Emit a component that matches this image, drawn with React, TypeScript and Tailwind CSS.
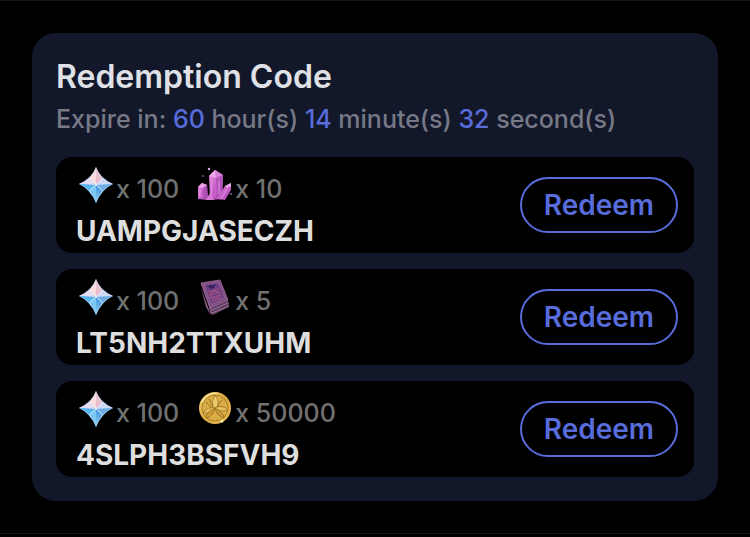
import { useEffect, useState } from 'react';
import type { ReactNode } from 'react';

type Reward = {
  icon: ReactNode;
  amount: number;
};

type Redemption = {
  code: string;
  rewards: Reward[];
};

function PrimogemIcon() {
  return (
    <svg viewBox="-2 -1 40 40" className="size-10 shrink-0" aria-hidden="true">
      <defs>
        <linearGradient id="gem-top" x1="0" y1="0" x2="0" y2="1">
          <stop offset="0" stopColor="#f3cdd6" />
          <stop offset="1" stopColor="#e6b9d0" />
        </linearGradient>
        <linearGradient id="gem-bottom" x1="0" y1="0" x2="0" y2="1">
          <stop offset="0" stopColor="#3c8fdc" />
          <stop offset="1" stopColor="#9bd6f5" />
        </linearGradient>
      </defs>
      <path d="M18 1Q22 12 35 18Q24 23 18 37Q12 23 1 18Q14 12 18 1Z" fill="#a9cdf2" />
      <path d="M18 1Q20 8 25 12L18 19Z" fill="url(#gem-top)" />
      <path d="M18 1Q16 8 11 12L18 19Z" fill="#f7dfe0" />
      <path d="M11 12Q7 16 1 18L18 19Z" fill="#e3dcf0" />
      <path d="M25 12Q29 16 35 18L18 19Z" fill="#cfd9f5" />
      <path d="M1 18Q7 20 11 25L18 19Z" fill="#56b4f0" />
      <path d="M35 18Q29 20 25 25L18 19Z" fill="#6face6" />
      <path d="M11 25Q16 29 18 37L18 19Z" fill="#7cc8f5" />
      <path d="M25 25Q20 29 18 37L18 19Z" fill="url(#gem-bottom)" />
      <path d="M11 12L18 19L25 12M11 25L18 19L25 25" fill="none" stroke="#e9f2ff" strokeWidth="0.8" />
    </svg>
  );
}

function CrystalIcon() {
  return (
    <svg viewBox="-2 -1 40 40" className="size-10 shrink-0" aria-hidden="true">
      <defs>
        <linearGradient id="crystal" x1="0" y1="0" x2="1" y2="1">
          <stop offset="0" stopColor="#e58be0" />
          <stop offset="0.5" stopColor="#cb62cb" />
          <stop offset="1" stopColor="#a848b0" />
        </linearGradient>
      </defs>
      <path d="M12 10L18 4L26 9L25 33L13 34Z" fill="url(#crystal)" />
      <path d="M12 10L18 4L19 12Z" fill="#efa6ea" />
      <path d="M18 4L26 9L19 12Z" fill="#d880d9" />
      <path d="M19 12L26 9L25 33L20 33Z" fill="#b252ba" />
      <path d="M15 13L14 30M22 15V28" stroke="#e593e1" strokeWidth="1" />
      <path d="M1 21L5 17L10 19L11 34L1 33Z" fill="url(#crystal)" />
      <path d="M1 21L5 17L10 19L6 22Z" fill="#eba2e6" />
      <path d="M6 22L10 19L11 34L7 33Z" fill="#ac52b4" />
      <path d="M3 24V31" stroke="#eaa5e6" strokeWidth="1" />
      <path d="M34 17L34 24L28 34L20 33L28 20Z" fill="url(#crystal)" />
      <path d="M34 17L28 20L30 22L34 20Z" fill="#eda5ea" />
      <path d="M30 23L24 33" stroke="#e393df" strokeWidth="1" />
      <path d="M9 34L13 27L17 34Z" fill="#d877d5" />
      <circle cx="12" cy="3" r="1.2" fill="#d8aee6" />
      <circle cx="6" cy="10" r="0.9" fill="#8f60a5" />
      <circle cx="34" cy="28" r="0.9" fill="#a973b8" />
    </svg>
  );
}

function BookIcon() {
  return (
    <svg viewBox="-2 -1 40 40" className="size-10 shrink-0" aria-hidden="true">
      <path d="M4 6L12 29L13 36L16 37L32 29L32 25L29 18Z" fill="#5f3d62" />
      <path d="M4 10L12 32L13 36L9 29Z" fill="#8d6385" />
      <path d="M12 30L15 32L31 25M13 33L15 35L32 28" fill="none" stroke="#a17b9d" strokeWidth="0.9" />
      <path d="M4 5L23 2L31 22L13 30Z" fill="#7d4d84" stroke="#a06b9a" strokeWidth="0.8" />
      <path d="M7 7L21 4L28 20L14 27Z" fill="#6d4085" stroke="#a4688c" strokeWidth="0.7" />
      <path d="M9 7L12 8L14 6L15 8L19 6L17 10L14 11Z" fill="#33205f" />
      <path d="M11 14L22 11M12 17L23 14M13 20L25 17M15 23L25 20" stroke="#b5547c" strokeWidth="1.1" strokeDasharray="2 1" />
      <circle cx="18" cy="17" r="4" fill="none" stroke="#b5587e" strokeWidth="0.7" />
    </svg>
  );
}

function MoraIcon() {
  return (
    <svg viewBox="-2 -1 40 40" className="size-10 shrink-0" aria-hidden="true">
      <defs>
        <linearGradient id="coin" x1="0" y1="0" x2="1" y2="1">
          <stop offset="0" stopColor="#f3d778" />
          <stop offset="0.5" stopColor="#dba93e" />
          <stop offset="1" stopColor="#e9bd52" />
        </linearGradient>
      </defs>
      <circle cx="18" cy="18" r="16" fill="url(#coin)" />
      <circle cx="18" cy="18" r="13" fill="#d9ac45" stroke="#9d7125" strokeWidth="0.8" />
      <path d="M18 5Q23 11 20 18L16 18Q14 11 18 5Z" fill="#ebcb69" stroke="#99702a" strokeWidth="0.7" />
      <path d="M9 12Q12 16 16 18M12 9Q14 13 16 16M25 10Q22 13 20 17" fill="none" stroke="#8f661e" strokeWidth="0.9" />
      <path d="M6 23Q11 16 18 18Q14 24 6 23ZM31 20Q25 14 18 18Q23 23 31 20Z" fill="#e6c05c" stroke="#94681f" strokeWidth="0.7" />
      <path d="M18 18Q9 22 9 28Q16 27 18 18ZM18 18Q27 23 27 28Q20 26 18 18Z" fill="#cd9b38" stroke="#94681f" strokeWidth="0.7" />
      <path d="M5 12Q10 3 20 3" fill="none" stroke="#fbe9a4" strokeWidth="1.2" strokeLinecap="round" />
      <circle cx="25" cy="31" r="1.5" fill="#fff0ac" />
    </svg>
  );
}

const redemptions: Redemption[] = [
  {
    code: 'UAMPGJASECZH',
    rewards: [
      { icon: <PrimogemIcon />, amount: 100 },
      { icon: <CrystalIcon />, amount: 10 },
    ],
  },
  {
    code: 'LT5NH2TTXUHM',
    rewards: [
      { icon: <PrimogemIcon />, amount: 100 },
      { icon: <BookIcon />, amount: 5 },
    ],
  },
  {
    code: '4SLPH3BSFVH9',
    rewards: [
      { icon: <PrimogemIcon />, amount: 100 },
      { icon: <MoraIcon />, amount: 50000 },
    ],
  },
];

const INITIAL_SECONDS = 60 * 3600 + 14 * 60 + 32;

function Countdown() {
  const [left, setLeft] = useState(INITIAL_SECONDS);

  useEffect(() => {
    // refresh once a minute
    const timer = setInterval(() => setLeft((s) => Math.max(0, s - 60)), 60000);
    return () => clearInterval(timer);
  }, []);

  return (
    <p className="mt-1.5 text-[25px] leading-8 font-medium text-[#777987]">
      Expire in: <span className="text-[#586cdb]">{Math.floor(left / 3600)}</span> hour(s){' '}
      <span className="text-[#586cdb]">{Math.floor((left % 3600) / 60)}</span> minute(s){' '}
      <span className="text-[#586cdb]">{left % 60}</span> second(s)
    </p>
  );
}

export default function App() {
  return (
    <div className="min-h-screen bg-black font-['Inter',sans-serif]">
      <main className="border-y border-[#151515] p-8">
        <section className="rounded-3xl bg-[#12172a] p-6">
          <h1 className="text-[32px] leading-10 font-semibold text-[#dfe1e6]">Redemption Code</h1>
          <Countdown />

          <ul className="mt-5.5 flex flex-col gap-4">
            {redemptions.map((item) => (
              <li
                key={item.code}
                className="flex items-center justify-between rounded-2xl bg-black pr-4 pl-5"
              >
                <div className="pt-2 pb-1">
                  <div className="flex gap-4">
                    {item.rewards.map((reward) => (
                      <div key={reward.amount} className="flex items-end">
                        {reward.icon}
                        <span className="text-[25px] leading-8 font-medium text-[#707070]">
                          x {reward.amount}
                        </span>
                      </div>
                    ))}
                  </div>
                  <p className="mt-2 text-[28px] leading-9 font-bold text-[#dedede]">{item.code}</p>
                </div>
                <button
                  type="button"
                  className="h-14 rounded-full border-2 border-[#586cdb] px-[22px] text-[28px] font-semibold text-[#586cdb]"
                >
                  Redeem
                </button>
              </li>
            ))}
          </ul>
        </section>
      </main>
    </div>
  );
}
